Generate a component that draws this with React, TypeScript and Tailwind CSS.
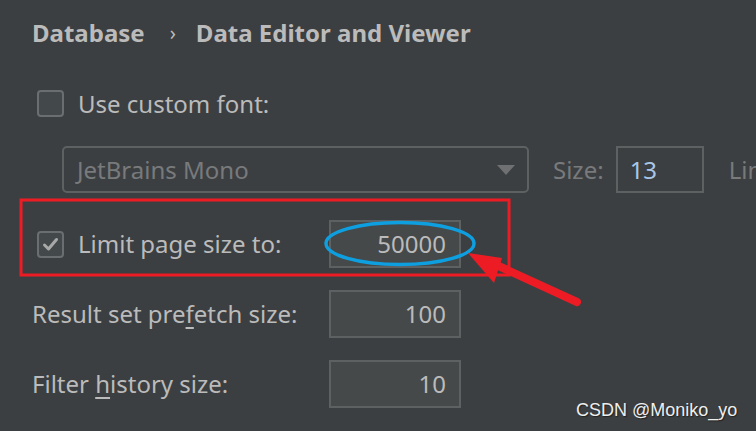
const font = "font-['Noto_Sans','Open_Sans',sans-serif]";

function Checkbox({ checked }: { checked?: boolean }) {
  return (
    <div className="w-[27px] h-[27px] shrink-0 rounded-[4px] border-2 border-[#6b6e70] bg-[#43494a] flex items-center justify-center">
      {checked && (
        <svg width="19" height="19" viewBox="0 0 19 19">
          <path d="M3.5 10 L7.5 14 L15.5 4.5" fill="none" stroke="#a8a8a8" strokeWidth="3" strokeLinecap="round" strokeLinejoin="round" />
        </svg>
      )}
    </div>
  );
}

function NumberField({ value }: { value: string }) {
  return (
    <div className="w-[132px] h-[48px] shrink-0 border-2 border-[#5e6162] bg-[#45494a] flex items-center justify-end pr-[13px] text-[24px] text-[#bbbbbb]">
      {value}
    </div>
  );
}

export default function App() {
  return (
    <div className={`relative w-[756px] h-[431px] overflow-hidden bg-[#3c3f41] text-[#bbbbbb] ${font}`}>
      <div className="flex flex-col pl-[32px] pt-[14px]">
        {/* breadcrumb */}
        <div className="h-[38px] flex items-center text-[24px] font-bold whitespace-nowrap">
          <span>Database</span>
          <span className="ml-[25px] font-normal text-[20px]">›</span>
          <span className="ml-[20px]">Data Editor and Viewer</span>
        </div>

        {/* custom font */}
        <div className="mt-[38px] h-[27px] pl-[5px] flex items-center gap-[14px] text-[24px]">
          <Checkbox />
          <span>Use custom font:</span>
        </div>

        <div className="mt-[29px] ml-[30px] h-[47px] flex items-center text-[24px] text-[#787a7c] whitespace-nowrap">
          <div className="w-[467px] h-[47px] shrink-0 rounded-[5px] border-2 border-[#5e6162] flex items-center justify-between pl-[13px] pr-[12px]">
            <span>JetBrains Mono</span>
            <svg width="18" height="10" viewBox="0 0 18 10">
              <path d="M0 0 H18 L9 10 Z" fill="#6e7072" />
            </svg>
          </div>
          <span className="ml-[24px] shrink-0">Size:</span>
          <div className="ml-[12px] w-[88px] h-[47px] shrink-0 border-2 border-[#5e6162] flex items-center pl-[12px] text-[#a9c6e6]">
            13
          </div>
          <span className="ml-[25px] shrink-0">Line spacing:</span>
        </div>

        {/* limit page size */}
        <div className="mt-[27px] h-[48px] flex items-center text-[24px]">
          <div className="w-[297px] shrink-0 pl-[5px] flex items-center gap-[14px]">
            <Checkbox checked />
            <span>Limit page size to:</span>
          </div>
          <NumberField value="50000" />
        </div>

        <div className="mt-[22px] h-[48px] flex items-center text-[24px]">
          <div className="w-[297px] shrink-0">
            Result set pre<span className="underline underline-offset-[4px]">f</span>etch size:
          </div>
          <NumberField value="100" />
        </div>

        <div className="mt-[22px] h-[48px] flex items-center text-[24px]">
          <div className="w-[297px] shrink-0">
            Filter <span className="underline underline-offset-[4px]">h</span>istory size:
          </div>
          <NumberField value="10" />
        </div>
      </div>

      {/* annotations */}
      <svg className="absolute inset-0 pointer-events-none" width="756" height="431" viewBox="0 0 756 431">
        <rect x="21" y="200" width="488" height="75" fill="none" stroke="#ed1c24" strokeWidth="3" />
        <ellipse cx="400" cy="243.5" rx="74" ry="21" fill="none" stroke="#0e9fe0" strokeWidth="3.5" />
        <line x1="577" y1="302" x2="492" y2="263" stroke="#ed1c24" strokeWidth="8" strokeLinecap="round" />
        <polygon points="468,253 502,258 494,283" fill="#ed1c24" />
      </svg>

      <div className="absolute left-[576px] top-[397px] font-['Liberation_Sans',Arial,sans-serif] text-[18px] text-[#eeeeee] [text-shadow:1px_1px_1px_#222]">
        CSDN @Moniko_yo
      </div>
    </div>
  );
}
